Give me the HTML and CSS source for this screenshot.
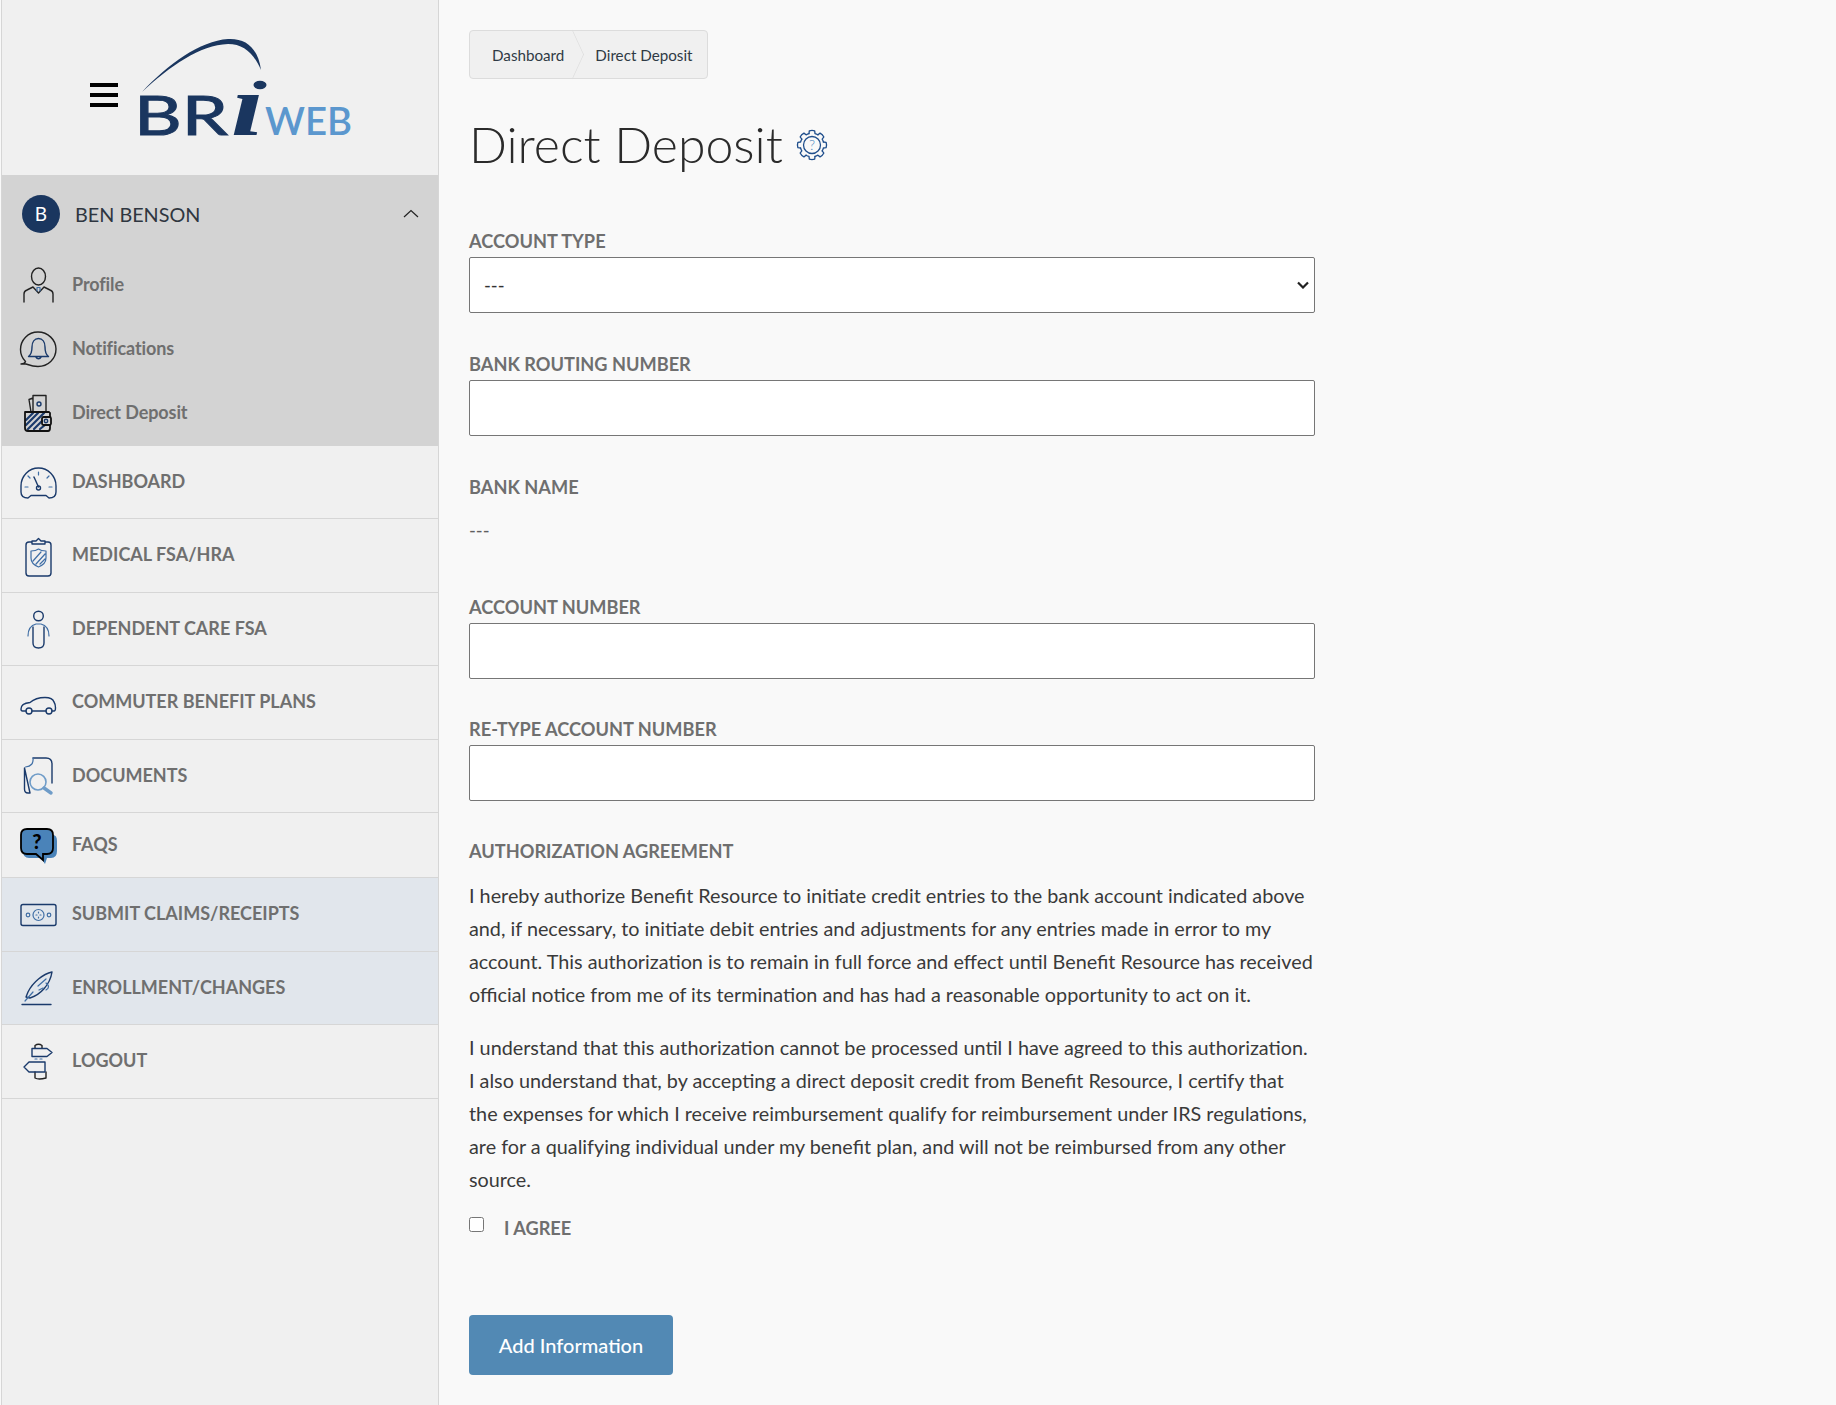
FILE: index.html
```html
<!DOCTYPE html>
<html lang="en">
<head>
<meta charset="utf-8">
<title>Direct Deposit</title>
<link rel="stylesheet" href="styles.css">
</head>
<body>
<div class="app">
<aside class="sidebar">
  <div class="brand">
    <div class="burger"><span></span><span></span><span></span></div>
    <svg class="logo" width="240" height="125" viewBox="-10 0 240 125">
      <path d="M2 68C28 40 60 17 88 15C106 14 118 24 121 46C114 30 104 20 88 20C60 21 30 42 2 68Z" fill="#1a365f"/>
      <text class="logo-br" x="-6" y="111" textLength="94" lengthAdjust="spacingAndGlyphs">BR</text>
      <ellipse cx="120" cy="61" rx="6.500" ry="4.200" fill="#1a365f"/>
      <text class="logo-i" x="91" y="111" textLength="33" lengthAdjust="spacingAndGlyphs">ı</text>
      <text class="logo-web" x="125" y="111" textLength="87" lengthAdjust="spacingAndGlyphs">WEB</text>
    </svg>
  </div>
  <section class="user">
    <div class="user-head">
      <span class="avatar">B</span>
      <span class="user-name">BEN BENSON</span>
      <svg class="caret" width="16" height="9" viewBox="0 0 16 9"><path d="M1 8L8 1.500L15 8" fill="none" stroke="#222" stroke-width="1.200"/></svg>
    </div>
    <a class="sub-item"><svg class="ico" viewBox="0 0 40 40"><ellipse cx="19.500" cy="12.500" rx="7" ry="8.500" class="k"/><path class="k" d="M5 38V30Q5 27 8 26L14 23L19.500 29L25 23L31 26Q34 27 34 30V38"/><path class="b" d="M18 27V23.500H21V27"/></svg><span>Profile</span></a>
    <a class="sub-item"><svg class="ico" viewBox="0 0 40 40"><path class="k" d="M2 36C5 36 6 35 6.500 33.500C3 30 1.500 26 1.500 21.500C1.500 12 9 4 19 4S37 12 37 21C37 31 29 38.500 19 38.500C14 38.500 10 37 7 36Z"/><path class="n" d="M9.500 28.500Q13 26 13 19C13 14 15.500 10.500 19.500 10.500S26 14 26 19Q26 26 29.500 28.500ZM16.500 28.500Q19.500 33 22.500 28.500"/></svg><span>Notifications</span></a>
    <a class="sub-item"><svg class="ico" viewBox="0 0 40 40"><path class="k" d="M14 20V3.500H27V20M14 6L10 7.500L12 20"/><circle class="n" cx="20" cy="12" r="2"/><path class="hatch" d="M7 28L14 21M7 33L19 21M9 37L25 21M15 37L23 29M21 37L26 33"/><path class="wallet" d="M6 20H30M6 20V36Q6 39 9 39H29Q31 39 31 36V33M31 25V21"/><rect class="wallet" x="23" y="25" width="9" height="8" rx="1.500"/><circle class="n" cx="27" cy="29" r="1.700"/></svg><span>Direct Deposit</span></a>
  </section>
  <nav class="nav">
    <a class="nav-item r73"><svg class="ico" viewBox="0 0 40 40"><path class="n" d="M9 36Q2 36 2 30V24C2 14 10 6 19.500 6S37 14 37 24V30Q37 36 30 36L27 33.500H12Z"/><path class="n" d="M15 15L19.500 25"/><circle class="n" cx="19.500" cy="26" r="2"/><path class="b" d="M19.500 10V13M9 14L11 16M30 14L28 16M6 25H9M30 25H33"/></svg><span>DASHBOARD</span></a>
    <a class="nav-item r74"><svg class="ico" viewBox="0 0 40 40"><path class="n" d="M13 6H10Q7 6 7 9V37Q7 40 10 40H29Q32 40 32 37V9Q32 6 29 6H26M13 8V5H17L19.500 2.500L22 5H26V8Z"/><path class="b" d="M12 15Q17 15 19.500 13Q22 15 27 15V22Q27 28 19.500 31Q12 28 12 22ZM14 25L22 16M17 28L26 18M21 28L26 23"/></svg><span>MEDICAL FSA/HRA</span></a>
    <a class="nav-item r73"><svg class="ico" viewBox="0 0 40 40"><circle class="n" cx="19.500" cy="7" r="4.800"/><path class="n" d="M14 18V34Q14 39 19.500 39T25 34V18"/><path class="b" d="M9 27Q9 17 17 15H22Q30 17 30 27"/></svg><span>DEPENDENT CARE FSA</span></a>
    <a class="nav-item r74"><svg class="ico" viewBox="0 0 40 40"><path class="n" d="M7 28H3.500Q2 28 2 26C2 22 6 20 11 19.500C15 16 20 14.500 26 14.500C31 14.500 34 16 35 19C37 22 37 28 35 28H33M27 28H13"/><circle class="n" cx="10" cy="28" r="3"/><circle class="n" cx="30" cy="28" r="3"/></svg><span>COMMUTER BENEFIT PLANS</span></a>
    <a class="nav-item r73"><svg class="ico" viewBox="0 0 40 40"><path class="n" d="M14 2H27Q33 2 33 8V27M11 37H9Q5.500 37 5.500 33V12Z"/><path class="b" d="M14 2Q15 10 6.500 11"/><circle class="glass" cx="19" cy="26" r="8"/><path class="handle" d="M25 32L32 37"/></svg><span>DOCUMENTS</span></a>
    <a class="nav-item r65"><svg class="ico" viewBox="0 0 40 40"><path d="M4 10H34Q38 10 38 16V26Q38 33 32 33H28L26 39L22 33H10Q4 33 4 26Z" fill="#4a83b9"/><path d="M8 4H28Q34 4 34 10V23Q34 29 28 29H24L24 35L17 29H8Q2 29 2 23V10Q2 4 8 4Z" fill="#4a83b9" stroke="#000" stroke-width="1.800"/><text class="faq-q" x="18" y="24" text-anchor="middle">?</text></svg><span>FAQS</span></a>
    <a class="nav-item r74 tint"><svg class="ico" viewBox="0 0 40 40"><rect class="n" x="2" y="9.500" width="35" height="21" rx="2"/><circle class="b" cx="19.500" cy="20" r="5.500"/><circle class="b" cx="9" cy="20" r="1.800"/><circle class="b" cx="30" cy="20" r="1.800"/><path class="b" d="M19.500 17V18M17 20H18M21 20H22M19.500 22V23"/></svg><span>SUBMIT CLAIMS/RECEIPTS</span></a>
    <a class="nav-item r73 tint"><svg class="ico" viewBox="0 0 40 40"><path class="n" d="M33 4C24 6 14 14 9 24L7 29L11 30C21 27 31 17 33 4Z"/><path class="b" d="M6 33L14 24M19 18L27 11M20 22L24 20M27 15Q32 19 27 22"/><path class="n" d="M3 36.500H32"/></svg><span>ENROLLMENT/CHANGES</span></a>
    <a class="nav-item r74"><svg class="ico" viewBox="0 0 40 40"><path class="k" d="M16 6V3.500Q19.500 1 23 3.500V6M16 30V36Q19.500 38 27 36V30"/><path class="n" d="M13 6.500H28L33 10.500L28 14.500H13ZM26 20H10L5 25L10 30H26Z"/><path class="b" d="M16 17H18M21 17H23"/></svg><span>LOGOUT</span></a>
  </nav>
</aside>
<main class="main">
  <ol class="crumbs">
    <li class="crumb crumb-first">Dashboard</li>
    <li class="crumb">Direct Deposit</li>
  </ol>
  <h1 class="title">Direct Deposit
    <svg class="help" width="32" height="32" viewBox="0 0 32 32">
      <defs><path id="tooth" d="M13 4.600L13.300 1.900Q16 1 18.700 1.900L19 4.600Q20.600 5 21.900 5.800"/></defs>
      <g class="n thin">
        <use href="#tooth"/><use href="#tooth" transform="rotate(45 16 16)"/><use href="#tooth" transform="rotate(90 16 16)"/><use href="#tooth" transform="rotate(135 16 16)"/><use href="#tooth" transform="rotate(180 16 16)"/><use href="#tooth" transform="rotate(225 16 16)"/><use href="#tooth" transform="rotate(270 16 16)"/><use href="#tooth" transform="rotate(315 16 16)"/>
      </g>
      <circle class="n thin" cx="16" cy="16" r="8.500"/>
      <text class="help-q" x="16" y="21" text-anchor="middle">?</text>
    </svg>
  </h1>
  <form class="form">
    <div class="field">
      <label class="label" for="t">ACCOUNT TYPE</label>
      <select class="control control-select" id="t"><option>---</option></select>
    </div>
    <div class="field">
      <label class="label" for="r">BANK ROUTING NUMBER</label>
      <input class="control" id="r" type="text">
    </div>
    <div class="field field-static">
      <div class="label">BANK NAME</div>
      <div class="static">---</div>
    </div>
    <div class="field field-tight">
      <label class="label" for="a">ACCOUNT NUMBER</label>
      <input class="control" id="a" type="text">
    </div>
    <div class="field">
      <label class="label" for="b">RE-TYPE ACCOUNT NUMBER</label>
      <input class="control" id="b" type="text">
    </div>
    <div class="label agree-head">AUTHORIZATION AGREEMENT</div>
    <p class="para">I hereby authorize Benefit Resource to initiate credit entries to the bank account indicated above and, if necessary, to initiate debit entries and adjustments for any entries made in error to my account. This authorization is to remain in full force and effect until Benefit Resource has received official notice from me of its termination and has had a reasonable opportunity to act on it.</p>
    <p class="para">I understand that this authorization cannot be processed until I have agreed to this authorization. I also understand that, by accepting a direct deposit credit from Benefit Resource, I certify that the expenses for which I receive reimbursement qualify for reimbursement under IRS regulations, are for a qualifying individual under my benefit plan, and will not be reimbursed from any other source.</p>
    <label class="agree"><input class="check" type="checkbox"><span class="agree-text">I AGREE</span></label>
    <button class="submit" type="button">Add Information</button>
  </form>
</main>
</div>
</body>
</html>
```

FILE: styles.css
```css
* { box-sizing: border-box; }
html, body { margin: 0; height: 100%; }
body { background: #f9f9f9; font-family: Lato, "Open Sans", sans-serif; color: #333; }
.app { display: flex; min-height: 1405px; }

.sidebar { width: 438px; margin-left: 1px; flex: none; background: #f0f0f0; border-left: 1px solid #d6d6d6; border-right: 1px solid #d6d6d6; }
.brand { height: 175px; display: flex; align-items: flex-start; }
.burger { margin: 83px 0 0 88px; width: 28px; display: flex; flex-direction: column; gap: 6px; }
.burger span { display: block; height: 4px; background: #000; }
.logo { margin: 24px 0 0 12px; display: block; overflow: visible; }
.logo text { font-family: Lato, sans-serif; }
.logo-br { font-size: 54px; fill: #1a365f; font-weight: 400; stroke: #1a365f; stroke-width: 1; }
.logo .logo-i { font-size: 86px; fill: #1a365f; font-family: "Liberation Serif", serif; font-style: italic; font-weight: 700; }
.logo-web { font-size: 38px; fill: #5b97ce; font-weight: 600; }

.user { background: #d3d3d3; padding-bottom: 2px; }
.user-head { height: 77px; display: flex; align-items: center; padding: 0 19px 0 20px; }
.avatar { width: 38px; height: 38px; border-radius: 50%; background: #1a365f; color: #fff; display: flex; align-items: center; justify-content: center; font-size: 19px; }
.user-name { margin-left: 15px; font-size: 19.800px; color: #2f3640; flex: 1; }
.caret { display: block; }

.sub-item, .nav-item { display: flex; align-items: center; padding-left: 17px; color: #6f6f6f; font-size: 18px; font-weight: 700; }
.sub-item { height: 64px; letter-spacing: -.1px; }
.nav-item { border-bottom: 1px solid #d6d6d6; }
.nav-item span { padding-bottom: 3px; }
.ico { width: 40px; height: 40px; flex: none; margin-right: 13px; overflow: visible; }
.r65 { height: 65px; }
.r73 { height: 73px; }
.r74 { height: 74px; }
.tint { background: #e1e6ec; }

.k, .n, .b, .hatch, .wallet, .glass, .handle { fill: none; stroke-linecap: round; stroke-linejoin: round; stroke-width: 1.400; }
.k { stroke: #222; }
.n { stroke: #1a3a6b; }
.b { stroke: #3f6ea5; stroke-width: 1.200; }
.hatch { stroke: #1a3a6b; stroke-width: 2.200; }
.wallet { stroke: #111; stroke-width: 1.800; }
.glass { stroke: #6f9cc8; stroke-width: 1.600; }
.handle { stroke: #6f9cc8; stroke-width: 3.400; }
.thin { stroke: #1f4e8c; stroke-width: 1.300; }
.faq-q { font-size: 20px; font-weight: 900; fill: #000; font-family: Lato, sans-serif; }
.help-q { font-size: 14px; fill: #4f86bd; font-family: Lato, sans-serif; }

.main { flex: 1; padding: 30px 0 0 30px; }
.crumbs { list-style: none; margin: 0; padding: 0; display: inline-flex; height: 49px; background: #f0f0f0; border: 1px solid #dcdcdc; border-radius: 4px; font-size: 15.200px; color: #2f3a45; }
.crumb { display: flex; align-items: center; padding: 0 15px 0 11px; position: relative; }
.crumb-first { padding: 0 20px 0 22px; }
.crumb-first::after { content: ""; position: absolute; right: -6px; top: 6px; width: 34px; height: 34px; border-top: 1px solid #dcdcdc; border-right: 1px solid #dcdcdc; transform: scaleX(.46) rotate(45deg); }
.title { font-size: 50px; font-weight: 300; margin: 35px 0 0; line-height: 60px; color: #2b2b2b; display: flex; align-items: center; gap: 13px; }
.help { display: block; margin-top: 2px; }

.form { width: 846px; margin-top: 54px; }
.field { margin-bottom: 38px; }
.field-static { margin-bottom: 50px; }
.field-tight { margin-bottom: 37px; }
.label { display: block; font-size: 18.200px; font-weight: 700; color: #6f6f6f; line-height: 27px; padding-bottom: 2px; }
.control { display: block; width: 100%; height: 56px; border: 1px solid #767676; border-radius: 2px; background: #fff; padding: 0 15px; font: 18.500px Lato, sans-serif; color: #333; }
.control-select { appearance: none; padding-left: 14px; background: #fff url("data:image/svg+xml,%3Csvg xmlns='http://www.w3.org/2000/svg' width='12' height='8' viewBox='0 0 12 8'%3E%3Cpath d='M1 1.500L6 6.500L11 1.500' fill='none' stroke='%23222' stroke-width='2.200'/%3E%3C/svg%3E") no-repeat right 5px center; }
.static { font-size: 18.500px; color: #5f5f5f; line-height: 27px; margin-top: 14px; }
.agree-head { margin: -1px 0 12px; }
.para { margin: 0 0 20px; font-size: 19.800px; line-height: 33px; color: #3a3a3a; }
.agree { display: flex; align-items: flex-start; margin-top: -2px; }
.check { width: 15px; height: 15px; margin: 3px 20px 0 0; }
.agree-text { font-size: 18.200px; font-weight: 700; color: #6f6f6f; line-height: 29px; }
.submit { display: block; margin-top: 72px; width: 204px; height: 60px; border: 0; border-radius: 4px; background: #5289b4; color: #fff; font: 500 20px Lato, sans-serif; }
```
